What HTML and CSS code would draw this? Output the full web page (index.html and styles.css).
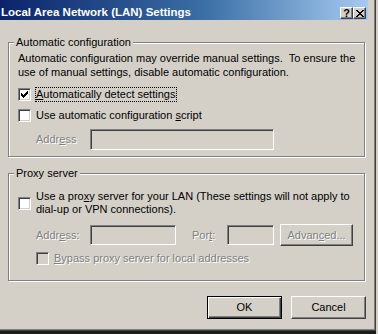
FILE: index.html
```html
<!DOCTYPE html>
<html>
<head>
<meta charset="utf-8">
<title>Local Area Network (LAN) Settings</title>
<link rel="stylesheet" href="styles.css">
</head>
<body>
<div class="window">
  <div class="titlebar">
    <span class="title">Local Area Network (LAN) Settings</span>
    <div class="caption-buttons">
      <span class="cap-btn help">?</span>
      <span class="cap-btn close"><svg width="8" height="7" viewBox="0 0 8 7" shape-rendering="crispEdges"><path d="M0 0h2v1H0zM6 0h2v1H6zM1 1h2v1H1zM5 1h2v1H5zM2 2h4v1H2zM3 3h2v1H3zM2 4h4v1H2zM1 5h2v1H1zM5 5h2v1H5zM0 6h2v1H0zM6 6h2v1H6z" fill="#000"/></svg></span>
    </div>
  </div>
  <div class="client">
    <div class="group group-auto">
      <div class="group-label">Automatic configuration</div>
      <p class="desc">Automatic configuration may override manual settings.&nbsp; To ensure the<br>use of manual settings, disable automatic configuration.</p>
      <div class="check-row first">
        <span class="checkbox"><svg width="7" height="7" viewBox="0 0 7 7" shape-rendering="crispEdges"><path d="M6 0h1v1H6zM5 1h2v1H5zM0 2h1v1H0zM4 2h3v1H4zM0 3h2v1H0zM3 3h3v1H3zM0 4h5v1H0zM1 5h3v1H1zM2 6h1v1H2z" fill="#000"/></svg></span>
        <span class="lbl focus"><u>A</u>utomatically detect settings</span>
      </div>
      <div class="check-row">
        <span class="checkbox"></span>
        <span class="lbl">Use automatic configuration <u>s</u>cript</span>
      </div>
      <div class="field-row">
        <span class="field-label disabled wide">Addr<u>e</u>ss</span>
        <span class="edit edit-script"></span>
      </div>
    </div>

    <div class="group group-proxy">
      <div class="group-label">Proxy server</div>
      <div class="check-row multi">
        <span class="checkbox"></span>
        <span class="lbl">Use a pro<u>x</u>y server for your LAN (These settings will not apply to<br>dial-up or VPN connections).</span>
      </div>
      <div class="field-row proxy-fields">
        <span class="field-label disabled wide">Addr<u>e</u>ss:</span>
        <span class="edit edit-addr"></span>
        <span class="field-label disabled port">Por<u>t</u>:</span>
        <span class="edit edit-port"></span>
        <span class="btn btn-adv disabled">Advan<u>c</u>ed...</span>
      </div>
      <div class="check-row bypass">
        <span class="checkbox off"></span>
        <span class="lbl disabled"><u>B</u>ypass proxy server for local addresses</span>
      </div>
    </div>

    <div class="buttons">
      <span class="btn btn-default">OK</span>
      <span class="btn">Cancel</span>
    </div>
  </div>
</div>
<div class="below"></div>
</body>
</html>
```
FILE: styles.css
```css
* {
  box-sizing: border-box;
}

html,
body {
  margin: 0;
  padding: 0;
}

body {
  width: 378px;
  height: 334px;
  overflow: hidden;
  background: #d4d0c8;
  font-family: "Liberation Sans", Arial, sans-serif;
  font-size: 11px;
  color: #000;
}

.window {
  width: 376px;
  height: 331px;
  background: #d4d0c8;
  border-right: 1px solid #404040;
  border-bottom: 1px solid #404040;
  box-shadow: inset -1px -1px 0 #808080;
  padding-right: 2px;
}

.titlebar {
  height: 20px;
  margin-right: 5px;
  padding: 0 2px 1px 1px;
  display: flex;
  align-items: flex-end;
  justify-content: space-between;
  background: linear-gradient(to right, #0a246a 0%, #3a6ea5 55%, #a6caf0 100%);
}

.title {
  color: #fff;
  font-weight: bold;
  font-size: 11.5px;
  line-height: 14px;
  white-space: nowrap;
}

.caption-buttons {
  display: flex;
}

.cap-btn {
  width: 13px;
  height: 12px;
  display: flex;
  align-items: center;
  justify-content: center;
  background: #d4d0c8;
  border: 1px solid;
  border-color: #fff #404040 #404040 #fff;
  box-shadow: inset -1px -1px 0 #808080;
  font-weight: bold;
  font-size: 11px;
  line-height: 8px;
}

.client {
  padding: 0 8px;
}

.group {
  border: 1px solid #808080;
  box-shadow: inset 1px 1px 0 #fff, 1px 1px 0 #fff;
  padding: 0 8px 6px 9px;
}

.group-auto {
  margin-top: 22px;
}

.group-proxy {
  margin-top: 16px;
  padding-bottom: 14px;
}

.group-label {
  width: fit-content;
  margin: -7px 0 0 -4px;
  padding: 0 2px;
  background: #d4d0c8;
  line-height: 13px;
  white-space: nowrap;
}

.desc {
  margin: 2px 0 0;
  line-height: 14px;
  white-space: nowrap;
}

.check-row {
  display: flex;
  align-items: center;
  height: 15px;
  margin-top: 6px;
}

.check-row.first {
  margin-top: 8px;
}

.check-row.multi {
  height: auto;
  margin-top: 10px;
}

.check-row.bypass {
  margin-top: 5px;
  padding-left: 18px;
}

.checkbox {
  flex: none;
  width: 13px;
  height: 13px;
  display: flex;
  align-items: center;
  justify-content: center;
  background: #fff;
  border: 1px solid;
  border-color: #808080 #fff #fff #808080;
  box-shadow: inset 1px 1px 0 #404040, inset -1px -1px 0 #d4d0c8;
}

.checkbox.off {
  background: #d4d0c8;
}

.lbl {
  margin-left: 5px;
  line-height: 13px;
  white-space: nowrap;
}

.lbl.focus {
  margin-left: 4px;
  padding-right: 1px;
  border: 1px dotted #000;
}

.disabled {
  color: #808080;
  text-shadow: 1px 1px 0 #fff;
}

.field-row {
  display: flex;
  align-items: center;
  margin-top: 6px;
}

.proxy-fields {
  margin-top: 8px;
  height: 22px;
}

.field-label {
  line-height: 13px;
  white-space: nowrap;
}

.field-label.wide {
  width: 54px;
  margin-left: 18px;
}

.field-label.port {
  width: 35px;
  margin-left: 16px;
}

.edit {
  display: block;
  height: 20px;
  background: #d4d0c8;
  border: 1px solid;
  border-color: #808080 #fff #fff #808080;
  box-shadow: inset 1px 1px 0 #404040, inset -1px -1px 0 #d4d0c8;
}

.edit-script {
  width: 184px;
  height: 21px;
}

.edit-addr {
  width: 86px;
}

.edit-port {
  width: 47px;
}

.btn {
  display: flex;
  align-items: center;
  justify-content: center;
  width: 75px;
  height: 23px;
  background: #d4d0c8;
  border: 1px solid;
  border-color: #fff #404040 #404040 #fff;
  box-shadow: inset -1px -1px 0 #808080;
  line-height: 13px;
  white-space: nowrap;
}

.btn-adv {
  width: 73px;
  height: 22px;
  margin-left: 6px;
}

.btn-default {
  border-color: #000;
  box-shadow: inset 1px 1px 0 #fff, inset -1px -1px 0 #404040, inset -2px -2px 0 #808080;
}

.buttons {
  display: flex;
  justify-content: flex-end;
  gap: 9px;
  margin-top: 15px;
  margin-right: -1px;
}

.below {
  width: 376px;
  height: 3px;
  background: #1c1c1c;
}
```
